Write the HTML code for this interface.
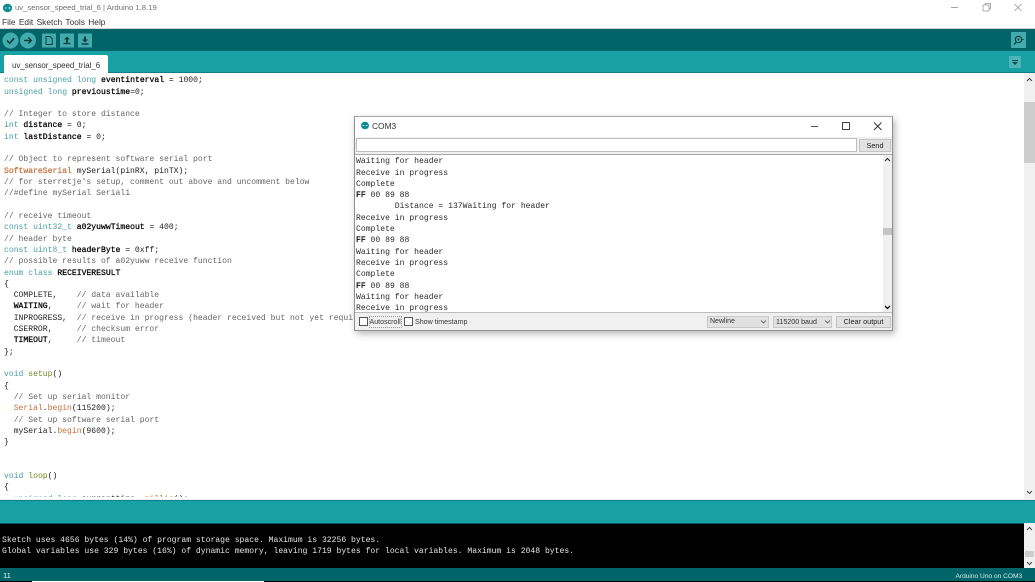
<!DOCTYPE html>
<html><head><meta charset="utf-8">
<style>
html,body{margin:0;padding:0;width:1035px;height:582px;overflow:hidden;background:#fff;font-family:"Liberation Sans",sans-serif}
.a{position:absolute}
#soft{position:absolute;left:0;top:0;width:1035px;height:582px;overflow:hidden;filter:blur(.35px)}
.m{font-family:"Liberation Mono",monospace;font-size:8.08px;line-height:11.32px;white-space:pre;color:#222}
.k{color:#4d9ea3}.c{color:#666}.o{color:#c4703a}.g{color:#6f8a20}.b{color:#000;-webkit-text-stroke:.25px #000}
.s{font-size:7.1px;color:#333;white-space:pre}
.btn{background:#e1e1e1;border:1px solid #c4c4c4;box-sizing:border-box;text-align:center;font-size:7.3px;color:#222}
</style></head><body><div id="soft">

<!-- title bar -->
<svg class="a" style="left:2px;top:3px" width="11" height="10" viewBox="0 0 11 10"><ellipse cx="5.500" cy="5" rx="4.600" ry="4.200" fill="#0a8c92"/><path d="M2.800 5h1.800M6.500 5h1.800M7.400 4.100v1.800" stroke="#fff" stroke-width=".7"/></svg>
<div class="a" style="left:15px;top:3px;font-size:7.700px;line-height:10px;color:#707070;white-space:pre">uv_sensor_speed_trial_6 | Arduino 1.8.19</div>
<div class="a" style="left:2px;top:17px;font-size:8.400px;line-height:11px;color:#333;word-spacing:1px;white-space:pre">File Edit Sketch Tools Help</div>
<svg class="a" style="left:945px;top:0" width="90" height="16" viewBox="0 0 90 16"><path d="M6 7.500h7" stroke="#999" stroke-width=".9"/><path d="M38 5h6v6h-6zM40 5v-1.500h5.500v5.500h-1.500" fill="none" stroke="#999" stroke-width=".8"/><path d="M69.500 4l7 7M76.500 4l-7 7" stroke="#999" stroke-width=".8"/></svg>

<!-- toolbar -->
<div class="a" style="left:0;top:28px;width:1035px;height:1px;background:#c9d3d3"></div>
<div class="a" style="left:0;top:29px;width:1035px;height:22px;background:#006468"></div>
<svg class="a" style="left:0;top:29px" width="100" height="22" viewBox="0 0 100 22">
<circle cx="10.500" cy="11.500" r="8" fill="#43abae"/><path d="M7 11.500l2.700 2.700 4.500-5" fill="none" stroke="#0a3f42" stroke-width="1.600"/>
<circle cx="28" cy="11.500" r="8" fill="#43abae"/><path d="M24 11.500h7M28.300 8.500l3 3-3 3" fill="none" stroke="#0a3f42" stroke-width="1.500"/>
<rect x="42" y="4.500" width="14" height="14" fill="#43abae"/><path d="M46 7.500h4l2.200 2.200v5.800h-6.200z" fill="none" stroke="#0a3f42" stroke-width="1"/>
<rect x="60" y="4.500" width="14" height="14" fill="#43abae"/><path d="M63.500 14.500h7" stroke="#0a3f42" stroke-width="1.400"/><path d="M67 7.500l3 3h-2v3h-2v-3h-2z" fill="#0a3f42"/>
<rect x="78" y="4.500" width="14" height="14" fill="#43abae"/><path d="M81.500 15h7" stroke="#0a3f42" stroke-width="1.400"/><path d="M85 13.500l-3-3h2v-3h2v3h2z" fill="#0a3f42"/>
</svg>
<svg class="a" style="left:1011px;top:32px" width="15" height="16" viewBox="0 0 15 16"><rect width="15" height="16" fill="#43abae"/><circle cx="7.500" cy="7.500" r="3.200" fill="none" stroke="#0a3f42" stroke-width="1.200"/><circle cx="7.500" cy="7.500" r="1" fill="#0a3f42"/><path d="M5 10.500l-2 2" stroke="#0a3f42" stroke-width="1.300"/><path d="M11 7.500h2" stroke="#0a3f42" stroke-width=".7"/></svg>

<!-- tab bar -->
<div class="a" style="left:0;top:51px;width:1035px;height:21px;background:#17a1a5"></div>
<div class="a" style="left:0;top:72px;width:1035px;height:1px;background:#0e7f84"></div>
<div class="a" style="left:4px;top:55px;width:104px;height:18px;background:#fff;border-radius:2px 2px 0 0"></div>
<div class="a" style="left:12px;top:60px;font-size:7.900px;line-height:11px;color:#333;white-space:pre">uv_sensor_speed_trial_6</div>
<svg class="a" style="left:1009px;top:56px" width="12" height="12" viewBox="0 0 12 12"><rect width="12" height="12" fill="#4db4b7"/><path d="M3 4h6v1H3z" fill="#0a4f52"/><path d="M3 6h6l-3 3z" fill="#0a4f52"/></svg>

<!-- editor -->
<div class="a m" style="left:4px;top:75.200px"><span class="k">const</span> <span class="k">unsigned</span> <span class="k">long</span> <span class="b">eventinterval</span> = 1000;
<span class="k">unsigned</span> <span class="k">long</span> <span class="b">previoustime</span>=0;

<span class="c">// Integer to store distance</span>
<span class="k">int</span> <span class="b">distance</span> = 0;
<span class="k">int</span> <span class="b">lastDistance</span> = 0;

<span class="c">// Object to represent software serial port</span>
<span class="o" style="-webkit-text-stroke:.2px #c4703a">SoftwareSerial</span> mySerial(pinRX, pinTX);
<span class="c">// for sterretje's setup, comment out above and uncomment below</span>
<span class="c">//#define mySerial Serial1</span>

<span class="c">// receive timeout</span>
<span class="k">const</span> <span class="k">uint32_t</span> <span class="b">a02yuwwTimeout</span> = 400;
<span class="c">// header byte</span>
<span class="k">const</span> <span class="k">uint8_t</span> <span class="b">headerByte</span> = 0xff;
<span class="c">// possible results of a02yuww receive function</span>
<span class="k">enum</span> <span class="k">class</span> <span class="b">RECEIVERESULT</span>
{
  COMPLETE,    <span class="c">// data available</span>
  <span class="b">WAITING</span>,     <span class="c">// wait for header</span>
  INPROGRESS,  <span class="c">// receive in progress (header received but not yet required</span>
  CSERROR,     <span class="c">// checksum error</span>
  <span class="b">TIMEOUT</span>,     <span class="c">// timeout</span>
};

<span class="k">void</span> <span class="g">setup</span>()
{
  <span class="c">// Set up serial monitor</span>
  <span class="o">Serial</span>.<span class="o">begin</span>(115200);
  <span class="c">// Set up software serial port</span>
  mySerial.<span class="o">begin</span>(9600);
}


<span class="k">void</span> <span class="g">loop</span>()
{
  <span class="k">unsigned</span> <span class="k">long</span> currenttime= <span class="o">millis</span>();</div>
<div class="a" style="left:0;top:497px;width:1024px;height:4px;background:#fff"></div>
<div class="a" style="left:0;top:499px;width:1024px;height:1px;background:#f2f2f2"></div>

<!-- editor scrollbar -->
<div class="a" style="left:1024px;top:73px;width:11px;height:427px;background:#f0f0f0"></div>
<div class="a" style="left:1024px;top:102px;width:11px;height:61px;background:#cdcdcd"></div>
<svg class="a" style="left:1024px;top:75px" width="11" height="10" viewBox="0 0 11 10"><path d="M3 6l2.500-2.500L8 6" fill="none" stroke="#444" stroke-width="1"/></svg>
<svg class="a" style="left:1024px;top:487px" width="11" height="10" viewBox="0 0 11 10"><path d="M3 4l2.500 2.500L8 4" fill="none" stroke="#444" stroke-width="1"/></svg>

<!-- divider / console / status -->
<div class="a" style="left:0;top:500px;width:1035px;height:1px;background:#0e7f84"></div>
<div class="a" style="left:0;top:501px;width:1035px;height:22px;background:#17a1a5"></div>
<div class="a" style="left:0;top:523px;width:1035px;height:46px;background:#000;border-top:1px solid #0c5a5e;box-sizing:border-box"></div>
<div class="a m" style="left:2px;top:534.500px;color:#e4e4e4">Sketch uses 4656 bytes (14%) of program storage space. Maximum is 32256 bytes.
Global variables use 329 bytes (16%) of dynamic memory, leaving 1719 bytes for local variables. Maximum is 2048 bytes.</div>
<div class="a" style="left:1024px;top:523px;width:11px;height:45px;background:#f0f0f0"></div>
<div class="a" style="left:1025px;top:551px;width:9px;height:6px;background:#cdcdcd"></div>
<svg class="a" style="left:1024px;top:524px" width="11" height="10" viewBox="0 0 11 10"><path d="M3 6l2.500-2.500L8 6" fill="none" stroke="#444" stroke-width="1"/></svg>
<svg class="a" style="left:1024px;top:558px" width="11" height="10" viewBox="0 0 11 10"><path d="M3 4l2.500 2.500L8 4" fill="none" stroke="#444" stroke-width="1"/></svg>
<div class="a" style="left:0;top:568px;width:1035px;height:13px;background:#006468"></div>
<div class="a" style="left:3px;top:571px;font-size:7.600px;line-height:9px;color:#dff">11</div>
<div class="a" style="left:955.500px;top:571.500px;font-size:6.600px;line-height:9px;color:#d8eeee;white-space:pre">Arduino Uno on COM3</div>
<div class="a" style="left:0;top:581px;width:1035px;height:1px;background:#000"></div>
<div class="a" style="left:32px;top:581px;width:232px;height:1px;background:#fff"></div>

<!-- serial monitor -->
<div class="a" style="left:354px;top:116px;width:539px;height:215px;background:#fff;border:1px solid #8e8e8e;border-top-color:#aaa;box-sizing:border-box;box-shadow:2px 3px 7px rgba(0,0,0,.28)"></div>
<svg class="a" style="left:360px;top:121px" width="10" height="9" viewBox="0 0 10 9"><ellipse cx="5" cy="4.500" rx="4" ry="3.800" fill="#0a8c92"/><path d="M2.500 4.500h1.700M5.800 4.500h1.700" stroke="#fff" stroke-width=".7"/></svg>
<div class="a" style="left:372px;top:121px;font-size:8.400px;line-height:11px;color:#333">COM3</div>
<svg class="a" style="left:805px;top:116px" width="85" height="20" viewBox="0 0 85 20"><path d="M6 10.500h7" stroke="#555" stroke-width="1"/><rect x="37.500" y="6.500" width="7" height="7" fill="none" stroke="#444" stroke-width="1"/><path d="M69 6.500l7.500 7.500M76.500 6.500L69 14" stroke="#333" stroke-width="1"/></svg>
<div class="a" style="left:355px;top:137px;width:537px;height:17px;background:#f0f0f0"></div>
<div class="a" style="left:356px;top:138px;width:501px;height:14px;background:#fff;border:1px solid #bdbdbd;box-sizing:border-box"></div>
<div class="a btn" style="left:859px;top:139px;width:32px;height:13px;line-height:11px">Send</div>
<div class="a" style="left:355px;top:153.500px;width:537px;height:1px;background:#a8a8a8"></div>
<div class="a m" style="left:356px;top:156.200px;width:527px;height:156px;overflow:hidden;color:#2a2a2a">Waiting for header
Receive in progress
Complete
<span class="b">FF</span> 00 89 88
        Distance = 137Waiting for header
Receive in progress
Complete
<span class="b">FF</span> 00 89 88
Waiting for header
Receive in progress
Complete
<span class="b">FF</span> 00 89 88
Waiting for header
Receive in progress</div>
<div class="a" style="left:883px;top:155px;width:9px;height:158px;background:#f0f0f0"></div>
<div class="a" style="left:883px;top:228px;width:9px;height:7px;background:#c4c4c4"></div>
<svg class="a" style="left:883px;top:156px" width="9" height="8" viewBox="0 0 9 8"><path d="M2 5l2.500-2.500L7 5" fill="none" stroke="#222" stroke-width="1"/></svg>
<svg class="a" style="left:883px;top:303px" width="9" height="8" viewBox="0 0 9 8"><path d="M2 3l2.500 2.500L7 3" fill="none" stroke="#000" stroke-width="1.300"/></svg>
<div class="a" style="left:355px;top:312px;width:537px;height:18px;background:#f0f0f0;border-top:1px solid #bdbdbd;box-sizing:border-box"></div>
<div class="a" style="left:359px;top:317px;width:9px;height:9px;background:#fff;border:1px solid #555;box-sizing:border-box"></div>
<div class="a s" style="left:369.500px;top:317px;line-height:10px;outline:1px dotted #999">Autoscroll</div>
<div class="a" style="left:404px;top:317px;width:9px;height:9px;background:#fff;border:1px solid #555;box-sizing:border-box"></div>
<div class="a s" style="left:415px;top:317px;line-height:10px">Show timestamp</div>
<div class="a" style="left:707px;top:316px;width:62px;height:12px;background:#e1e1e1;border:1px solid #c8c8c8;box-sizing:border-box;font-size:7px;line-height:10px;padding-left:2px;color:#333">Newline</div>
<div class="a" style="left:773px;top:316px;width:59px;height:12px;background:#e1e1e1;border:1px solid #c8c8c8;box-sizing:border-box;font-size:7.100px;line-height:10px;padding-left:2px;color:#333;white-space:pre">115200 baud</div>
<svg class="a" style="left:759px;top:318px" width="75" height="8" viewBox="0 0 75 8"><path d="M2 2.500l2.500 2.500L7 2.500M66 2.500l2.500 2.500L71 2.500" fill="none" stroke="#666" stroke-width=".9"/></svg>
<div class="a btn" style="left:836px;top:316px;width:55px;height:12px;line-height:10px">Clear output</div>

</div></body></html>
